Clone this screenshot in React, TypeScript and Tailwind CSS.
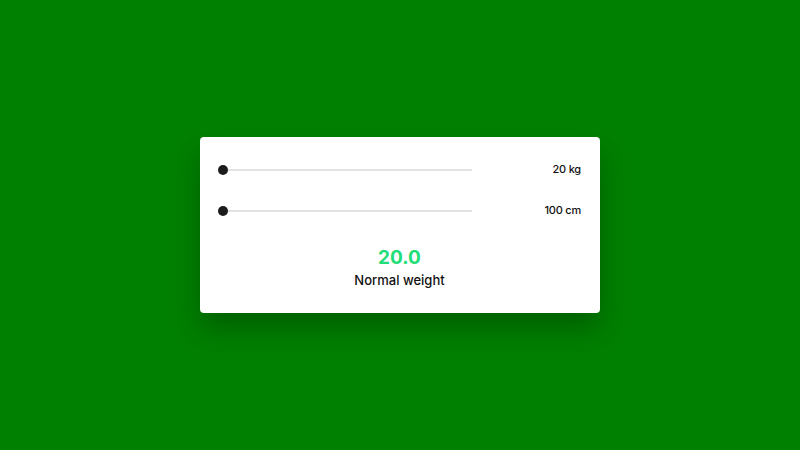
import React, { useState } from "react";

function SliderRow({ value, unit }: { value: number; unit: string }) {
  return (
    <div className="flex h-[41px] items-center">
      <div className="relative h-[10px] w-[254px]">
        <div className="absolute left-[5px] right-0 top-[4px] h-[2px] bg-[#e2e2e2]" />
        <div className="absolute left-0 top-0 h-[10px] w-[10px] rounded-full bg-[#1c1c1c]" />
      </div>
      <div className="flex-1 text-right text-[11px] font-medium tracking-[-0.2px] text-[#111]">
        {value} {unit}
      </div>
    </div>
  );
}

export default function App() {
  const [weight] = useState(20);
  const [height] = useState(100);
  const bmi = (weight / Math.pow(height / 100, 2)).toFixed(1);
  return (
    <div
      className="flex h-[450px] w-[800px] items-center justify-center bg-[#008000]"
      style={{ fontFamily: "Inter, 'Open Sans', sans-serif" }}
    >
      <div className="flex w-[400px] flex-col rounded-[4px] bg-white pb-[25px] pl-[18px] pr-[19px] pt-[12px] shadow-[0_16px_28px_rgba(0,40,0,0.35)]">
        <SliderRow value={weight} unit="kg" />
        <SliderRow value={height} unit="cm" />
        <div className="mt-[15px] flex flex-col items-center">
          <div className="text-[19px] font-bold leading-[24px] text-[#22dd77]">{bmi}</div>
          <div className="mt-[2px] text-[13px] font-medium leading-[16px] text-[#111]">
            Normal weight
          </div>
        </div>
      </div>
    </div>
  );
}
